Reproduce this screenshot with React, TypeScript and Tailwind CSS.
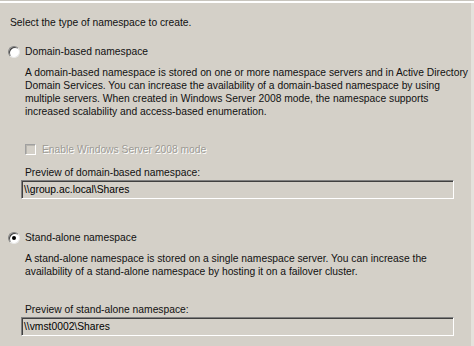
const Radio = ({ checked }: { checked?: boolean }) => (
  <span className="relative inline-flex w-[12px] h-[12px] shrink-0 items-center justify-center rounded-full bg-white border border-t-[#808080] border-l-[#808080] border-r-[#e8e8e8] border-b-[#e8e8e8] shadow-[inset_1px_1px_0_#404040]">
    {checked && <span className="w-[4px] h-[4px] rounded-full bg-black" />}
  </span>
);

const TextBox = ({ value }: { value: string }) => (
  <div className="w-[433px] h-[19px] flex items-center pl-[2px] border border-t-[#808080] border-l-[#808080] border-r-white border-b-white shadow-[inset_1px_1px_0_#404040] text-black">
    {value}
  </div>
);

export default function App() {
  return (
    <div className="w-[474px] h-[346px] bg-[#d4d0c8] overflow-hidden font-['Liberation_Sans',Arial,sans-serif] text-[10.3px] leading-[13px] text-[#111]">
      <div className="h-[1px] bg-[#c8c5be]" />
      <div className="h-[2px] bg-white" />
      <div className="flex h-[343px]">
        <div className="flex-1 flex flex-col pl-[10px]">
          <p className="mt-[13px]">Select the type of namespace to create.</p>

          <div className="mt-[16px] flex items-center gap-[5px] -ml-[2px]">
            <Radio />
            <span>Domain-based namespace</span>
          </div>

          <div className="pl-[15px] flex flex-col">
            <p className="mt-[8px] whitespace-nowrap">
              A domain-based namespace is stored on one or more namespace servers and in Active Directory
              <br />
              Domain Services. You can increase the availability of a domain-based namespace by using
              <br />
              multiple servers. When created in Windows Server 2008 mode, the namespace supports
              <br />
              increased scalability and access-based enumeration.
            </p>

            <div className="mt-[25px] flex items-center gap-[6px]">
              <span className="w-[11px] h-[11px] border border-[#a0a0a0] border-r-white border-b-white shadow-[inset_1px_1px_0_#b8b5ae]" />
              <span className="text-[#9c9a94] [text-shadow:1px_1px_0_#ffffff]">Enable Windows Server 2008 mode</span>
            </div>

            <p className="mt-[10px]">Preview of domain-based namespace:</p>
            <div className="mt-[1px] -ml-[4px]">
              <TextBox value="\\group.ac.local\Shares" />
            </div>

            <div className="mt-[32px] flex items-center gap-[5px] -ml-[17px]">
              <Radio checked />
              <span>Stand-alone namespace</span>
            </div>

            <p className="mt-[8px] whitespace-nowrap">
              A stand-alone namespace is stored on a single namespace server. You can increase the
              <br />
              availability of a stand-alone namespace by hosting it on a failover cluster.
            </p>

            <p className="mt-[25px]">Preview of stand-alone namespace:</p>
            <div className="mt-[1px] -ml-[4px]">
              <TextBox value="\\vmst0002\Shares" />
            </div>
          </div>
        </div>
        <div className="w-[3px] bg-[#e4e2dc]" />
      </div>
    </div>
  );
}
